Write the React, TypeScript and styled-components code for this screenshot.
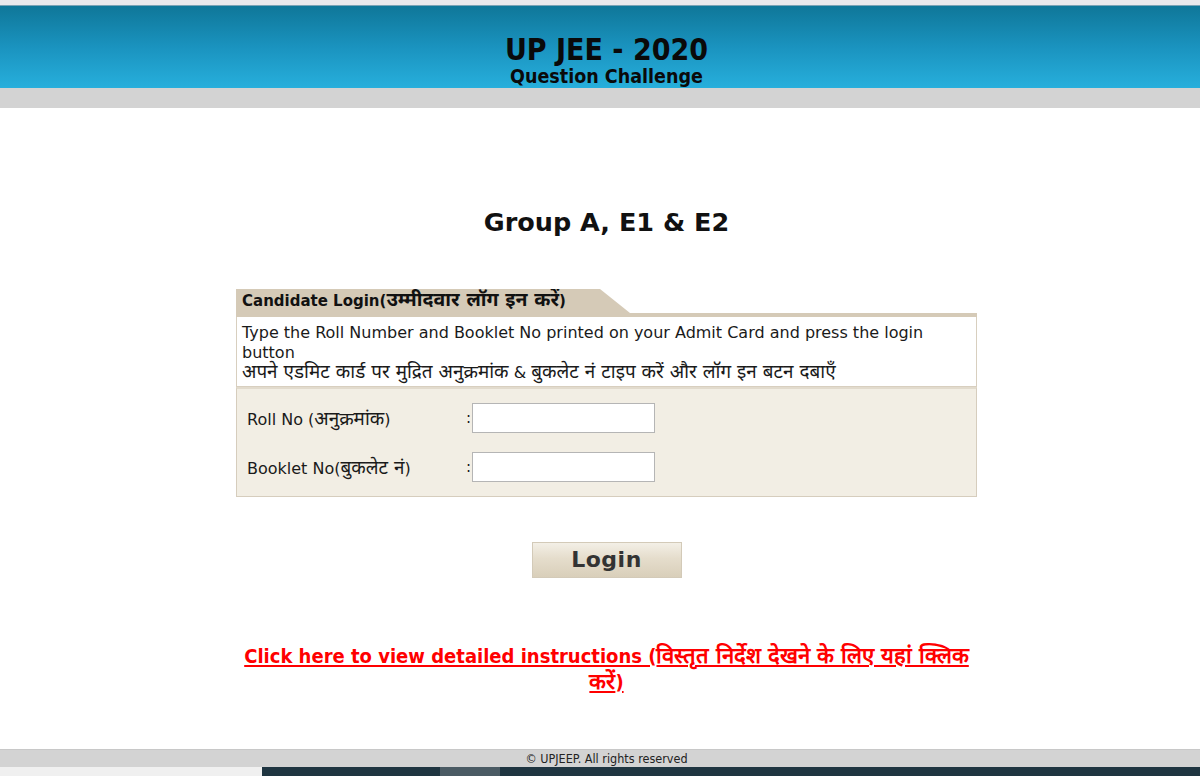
import React from 'react'
import styled, { createGlobalStyle } from 'styled-components'

const GlobalStyle = createGlobalStyle`
  html, body {
    margin: 0;
    padding: 0;
    background: #ffffff;
    overflow: hidden;
  }
  body {
    font-family: 'DejaVu Sans', Verdana, 'Noto Sans', sans-serif;
    color: #000;
  }
`

const Page = styled.div`
  width: 1213px;
  height: 776px;
  display: flex;
  flex-direction: column;
`

const TopStrip = styled.div`
  height: 5px;
  background: #e9e9ec;
  border-bottom: 1px solid #7aa3b5;
`

const HeaderFrame = styled.div`
  height: 82px;
  background: linear-gradient(to bottom, #0f7799 0%, #1a93bf 50%, #27afdc 100%);
  display: flex;
  flex-direction: column;
  align-items: center;
  justify-content: flex-end;
  box-sizing: border-box;
`

const SiteTitle = styled.div`
  font-family: 'DejaVu Sans Condensed', 'DejaVu Sans', sans-serif;
  font-stretch: condensed;
  font-weight: bold;
  font-size: 30px;
  line-height: 32px;
  color: #0a0a0a;
`

const SiteSubtitle = styled.div`
  font-family: 'DejaVu Sans Condensed', 'DejaVu Sans', sans-serif;
  font-stretch: condensed;
  font-weight: bold;
  font-size: 19.5px;
  line-height: 22px;
  color: #0a0a0a;
`

const GrayBand = styled.div`
  height: 20px;
  background: #d3d3d3;
`

const Main = styled.main`
  flex: 1;
  display: flex;
  flex-direction: column;
  align-items: center;
  padding-top: 98px;
`

const GroupHeading = styled.h1`
  margin: 0;
  font-size: 25.5px;
  line-height: 32px;
  font-weight: bold;
  color: #111;
`

// Devanagari fallback renders small, so scale it up a bit
const Hi = styled.span<{ $scale?: number }>`
  font-size: ${({ $scale }) => $scale ?? 1.18}em;
`

const Panel = styled.section`
  width: 741px;
  margin-top: 51px;
  display: flex;
  flex-direction: column;
`

const TabRow = styled.div`
  display: flex;
  border-bottom: 4px solid #d5cab7;
`

const Tab = styled.div`
  height: 24px;
  width: 394px;
  background: #d5cab7;
  clip-path: polygon(0 0, 364px 0, 100% 100%, 0 100%);
  font-size: 15px;
  font-weight: bold;
  line-height: 22px;
  padding-left: 6px;
  box-sizing: border-box;
  color: #111;
  white-space: nowrap;
  overflow: hidden;
`

const InfoBox = styled.div`
  background: #ffffff;
  border: 1px solid #d8cfbf;
  border-top: none;
  padding: 6px 5px 3px 5px;
  font-size: 16px;
  line-height: 19.5px;
  color: #1a1a1a;
`

const FormArea = styled.div`
  background: #f2eee4;
  border: 1px solid #d6cdbd;
  border-top: 2px solid #e2dbcd;
  padding: 14px 10px 14px 10px;
  display: flex;
  flex-direction: column;
  gap: 19px;
`

const FieldRow = styled.div`
  display: flex;
  align-items: center;
  height: 30px;
`

const FieldLabel = styled.label`
  width: 219px;
  font-size: 16px;
  color: #1a1a1a;
`

const Colon = styled.span`
  width: 6px;
  font-size: 15px;
  color: #1a1a1a;
`

const TextInput = styled.input`
  width: 183px;
  height: 30px;
  box-sizing: border-box;
  border: 1px solid #b5b5b5;
  background: #ffffff;
  outline: none;
  padding: 2px 4px;
  font-size: 14px;
`

const LoginButton = styled.button`
  margin-top: 45px;
  width: 150px;
  height: 36px;
  border: 1px solid #d3cab8;
  background: linear-gradient(to bottom, #f3efe6 0%, #e5ddcc 45%, #d9cfba 100%);
  font-family: 'DejaVu Sans', sans-serif;
  font-weight: bold;
  font-size: 22px;
  letter-spacing: 0.5px;
  color: #333;
  cursor: pointer;
  padding: 0;
`

const InstructionLink = styled.a`
  margin-top: 65px;
  width: 740px;
  text-align: center;
  font-family: 'DejaVu Sans Condensed', 'DejaVu Sans', sans-serif;
  font-stretch: condensed;
  font-weight: bold;
  font-size: 20px;
  line-height: 25px;
  color: #ff0000;
  text-decoration: underline;
  text-underline-offset: 2px;
  cursor: pointer;
`

const Footer = styled.footer`
  height: 17px;
  background: #d3d3d3;
  border-top: 1px solid #c8c8c8;
  display: flex;
  align-items: center;
  justify-content: center;
  font-family: 'DejaVu Sans Condensed', 'DejaVu Sans', sans-serif;
  font-stretch: condensed;
  font-size: 12.5px;
  color: #222;
`

const BottomStrip = styled.div`
  height: 9px;
  display: grid;
  grid-template-columns: 262px 178px 60px 1fr;
`

const StripSegment = styled.div<{ $tone: string }>`
  background: ${({ $tone }) => $tone};
`

export default function App() {
  return (
    <>
      <GlobalStyle />
      <Page>
        <TopStrip />
        <HeaderFrame>
          <SiteTitle>UP JEE - 2020</SiteTitle>
          <SiteSubtitle>Question Challenge</SiteSubtitle>
        </HeaderFrame>
        <GrayBand />
        <Main>
          <GroupHeading>Group A, E1 &amp; E2</GroupHeading>
          <Panel>
            <TabRow>
              <Tab>
                Candidate Login(<Hi $scale={1.3}>उम्मीदवार लॉग इन करें</Hi>)
              </Tab>
            </TabRow>
            <InfoBox>
              Type the Roll Number and Booklet No printed on your Admit Card and press the login button
              <br />
              <Hi>अपने एडमिट कार्ड पर मुद्रित अनुक्रमांक</Hi> &amp; <Hi>बुकलेट नं टाइप करें और लॉग इन बटन दबाएँ</Hi>
            </InfoBox>
            <FormArea>
              <FieldRow>
                <FieldLabel htmlFor="roll">
                  Roll No (<Hi>अनुक्रमांक</Hi>)
                </FieldLabel>
                <Colon>:</Colon>
                <TextInput id="roll" type="text" />
              </FieldRow>
              <FieldRow>
                <FieldLabel htmlFor="booklet">
                  Booklet No(<Hi>बुकलेट नं</Hi>)
                </FieldLabel>
                <Colon>:</Colon>
                <TextInput id="booklet" type="text" />
              </FieldRow>
            </FormArea>
          </Panel>
          <LoginButton type="button">Login</LoginButton>
          <InstructionLink>
            Click here to view detailed instructions (<Hi $scale={1.1}>विस्तृत निर्देश देखने के लिए यहां क्लिक करें</Hi>)
          </InstructionLink>
        </Main>
        <Footer>© UPJEEP. All rights reserved</Footer>
        <BottomStrip>
          <StripSegment $tone="#f0f0f0" />
          <StripSegment $tone="#1f3541" />
          <StripSegment $tone="#4b5b64" />
          <StripSegment $tone="#1f3541" />
        </BottomStrip>
      </Page>
    </>
  )
}
